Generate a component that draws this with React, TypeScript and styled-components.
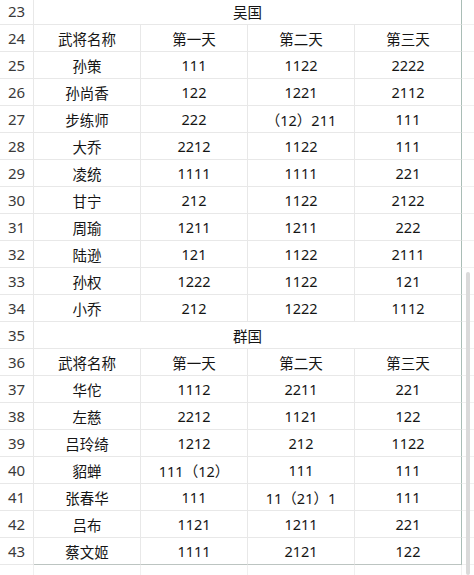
import React from 'react';
import styled, { createGlobalStyle } from 'styled-components';

const colors = {
  grid: '#e8e8e8',
  gridFaint: '#f0f0f0',
  edge: '#a9bdb6',
  bottom: '#bcc4c1',
  text: '#151515',
  rowNo: '#3a3a3a',
  thumb: '#dadada',
};

const GlobalStyle = createGlobalStyle`
  html, body {
    margin: 0;
    padding: 0;
    background: #fff;
  }
  body {
    font-family: 'Noto Sans', 'Noto Sans CJK SC', sans-serif;
  }
`;

const Viewport = styled.div`
  position: relative;
  width: 474px;
  height: 575px;
  overflow: hidden;
  background: #fff;
`;

const Sheet = styled.div`
  display: grid;
  grid-template-columns: 34px repeat(4, 107px) 1fr;
  grid-auto-rows: 27px;
  margin-top: -2px;
`;

const BaseCell = styled.div<{ $last?: boolean }>`
  box-sizing: border-box;
  display: flex;
  align-items: center;
  justify-content: center;
  border-bottom: 1px solid ${({ $last }) => ($last ? colors.bottom : colors.grid)};
  border-right: 1px solid ${colors.grid};
  white-space: nowrap;
`;

const RowHead = styled(BaseCell)`
  font-size: 15px;
  color: ${colors.rowNo};
  border-bottom-color: ${colors.grid};
`;

const Cell = styled(BaseCell)<{ $edge?: boolean }>`
  font-size: 14.5px;
  color: ${colors.text};
  border-right-color: ${({ $edge }) => ($edge ? colors.edge : colors.grid)};
`;

const Merged = styled(Cell)`
  grid-column: span 4;
`;

const Filler = styled.div`
  box-sizing: border-box;
  border-bottom: 1px solid ${colors.gridFaint};
`;

const Tail = styled.div`
  box-sizing: border-box;
  border-right: 1px solid ${colors.gridFaint};
`;

const Thumb = styled.div`
  position: absolute;
  top: 272px;
  bottom: 0;
  right: 4px;
  width: 4px;
  border-radius: 2px;
  background: ${colors.thumb};
`;

type Row =
  | { n: number; group: string }
  | { n: number; cells: [string, string, string, string] };

const header: [string, string, string, string] = ['武将名称', '第一天', '第二天', '第三天'];

const rows: Row[] = [
  { n: 23, group: '吴国' },
  { n: 24, cells: header },
  { n: 25, cells: ['孙策', '111', '1122', '2222'] },
  { n: 26, cells: ['孙尚香', '122', '1221', '2112'] },
  { n: 27, cells: ['步练师', '222', '（12）211', '111'] },
  { n: 28, cells: ['大乔', '2212', '1122', '111'] },
  { n: 29, cells: ['凌统', '1111', '1111', '221'] },
  { n: 30, cells: ['甘宁', '212', '1122', '2122'] },
  { n: 31, cells: ['周瑜', '1211', '1211', '222'] },
  { n: 32, cells: ['陆逊', '121', '1122', '2111'] },
  { n: 33, cells: ['孙权', '1222', '1122', '121'] },
  { n: 34, cells: ['小乔', '212', '1222', '1112'] },
  { n: 35, group: '群国' },
  { n: 36, cells: header },
  { n: 37, cells: ['华佗', '1112', '2211', '221'] },
  { n: 38, cells: ['左慈', '2212', '1121', '122'] },
  { n: 39, cells: ['吕玲绮', '1212', '212', '1122'] },
  { n: 40, cells: ['貂蝉', '111（12）', '111', '111'] },
  { n: 41, cells: ['张春华', '111', '11（21）1', '111'] },
  { n: 42, cells: ['吕布', '1121', '1211', '221'] },
  { n: 43, cells: ['蔡文姬', '1111', '2121', '122'] },
];

const App: React.FC = () => {
  const lastN = rows[rows.length - 1].n;

  return (
    <Viewport>
      <GlobalStyle />
      <Sheet>
        {rows.map(row => {
          const last = row.n === lastN;
          return (
            <React.Fragment key={row.n}>
              <RowHead>{row.n}</RowHead>
              {'group' in row ? (
                <Merged $edge $last={last}>{row.group}</Merged>
              ) : (
                row.cells.map((c, i) => (
                  <Cell key={i} $edge={i === 3} $last={last}>
                    {c}
                  </Cell>
                ))
              )}
              <Filler />
            </React.Fragment>
          );
        })}
        {/* next row, only the top of it is on screen */}
        <Tail />
        <Tail />
        <Tail />
        <Tail />
        <Tail />
      </Sheet>
      <Thumb />
    </Viewport>
  );
};

export default App;
